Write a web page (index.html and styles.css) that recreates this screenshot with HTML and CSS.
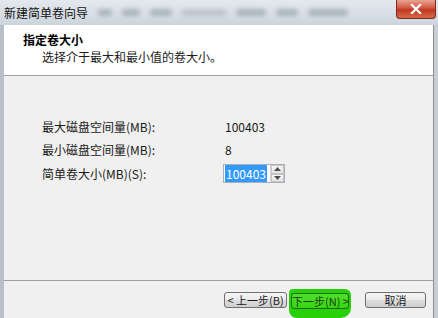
FILE: index.html
```html
<!DOCTYPE html>
<html lang="zh-CN">
<head>
  <meta charset="UTF-8">
  <title>新建简单卷向导</title>
  <link rel="stylesheet" href="styles.css">
</head>
<body>
  <div class="window">
    <div class="titlebar">
      <div class="title">新建简单卷向导</div>
      <div class="blur-strip">
        <span class="smudge w1"></span>
        <span class="smudge w2"></span>
        <span class="smudge w3"></span>
        <span class="smudge w4"></span>
        <span class="smudge w5"></span>
        <span class="smudge w6"></span>
        <span class="smudge w7"></span>
      </div>
      <div class="close-btn">
        <svg width="12" height="10" viewBox="0 0 12 10">
          <path d="M2 1 L10 9 M10 1 L2 9" stroke="#ffffff" stroke-width="2.4" stroke-linecap="square"></path>
        </svg>
      </div>
    </div>

    <div class="frame">
      <!-- Wizard header -->
      <div class="header">
        <div class="header-title">指定卷大小</div>
        <div class="header-sub">选择介于最大和最小值的卷大小。</div>
      </div>

      <!-- Wizard body -->
      <div class="body">
        <div class="field-grid">
          <div class="field-label">最大磁盘空间量(MB):</div>
          <div class="field-value">100403</div>

          <div class="field-label">最小磁盘空间量(MB):</div>
          <div class="field-value">8</div>

          <div class="field-label">简单卷大小(MB)(S):</div>
          <div class="spin">
            <div class="spin-input"><span class="selected">100403</span></div>
            <div class="spin-buttons">
              <div class="spin-btn">
                <svg width="7" height="4" viewBox="0 0 7 4"><path d="M0 4 L3.5 0 L7 4 Z" fill="#4d4d4d"></path></svg>
              </div>
              <div class="spin-btn">
                <svg width="7" height="4" viewBox="0 0 7 4"><path d="M0 0 L3.5 4 L7 0 Z" fill="#4d4d4d"></path></svg>
              </div>
            </div>
          </div>
        </div>
      </div>

      <!-- Buttons -->
      <div class="footer">
        <button class="btn btn-back">&lt; 上一步(B)</button>
        <div class="highlight">
          <button class="btn btn-next">下一步(N) &gt;</button>
        </div>
        <button class="btn btn-cancel">取消</button>
      </div>
    </div>
  </div>
</body>
</html>
```

FILE: styles.css
```css
* {
  margin: 0;
  padding: 0;
  box-sizing: border-box;
}

body {
  width: 438px;
  height: 318px;
  overflow: hidden;
  background: #dfe5ea;
  font-family: "Noto Sans CJK SC", "DejaVu Sans", sans-serif;
  font-size: 12px;
  color: #1a1a1a;
}

.window {
  display: flex;
  flex-direction: column;
  height: 318px;
}

.titlebar {
  height: 25px;
  display: flex;
  align-items: flex-start;
  background: linear-gradient(to bottom, #e4e9ee 0%, #d6dde4 60%, #ccd4dc 100%);
}

.title {
  padding: 4px 0 0 4px;
  font-size: 12px;
  line-height: 17px;
  color: #111111;
  white-space: nowrap;
}

.blur-strip {
  flex: 1;
  height: 25px;
  display: flex;
  align-items: center;
  gap: 10px;
  padding-left: 10px;
  filter: blur(2px);
  opacity: 0.4;
}

.smudge {
  height: 7px;
  background: #6c7682;
  border-radius: 3px;
}

.w1 { width: 14px; }
.w2 { width: 18px; }
.w3 { width: 22px; }
.w4 { width: 44px; opacity: 0.6; }
.w5 { width: 30px; }
.w6 { width: 22px; }
.w7 { width: 40px; }

.close-btn {
  width: 40px;
  height: 19px;
  margin-right: 2px;
  display: flex;
  align-items: center;
  justify-content: center;
  border: 1px solid #7a2a22;
  border-top: none;
  border-radius: 0 0 4px 4px;
  background: linear-gradient(to bottom, #e8a493 0%, #d2553f 45%, #c0381f 55%, #d66a4a 100%);
}

.frame {
  flex: 1;
  display: flex;
  flex-direction: column;
  border-left: 4px solid #b7c0c9;
  border-right: 4px solid #c6ced6;
}

.header {
  height: 51px;
  background: #ffffff;
  border-bottom: 1px solid #a0a0a0;
  border-right: 1px solid #8f8f8f;
  padding: 6px 0 0 19px;
}

.header-title {
  font-weight: 700;
  line-height: 17px;
  color: #000000;
}

.header-sub {
  padding-left: 19px;
  line-height: 17px;
  color: #1a1a1a;
}

.body {
  height: 205px;
  background: #f0f0f0;
  border-bottom: 1px solid #a0a0a0;
  border-right: 1px solid #8f8f8f;
  padding: 42px 0 0 38px;
}

.field-grid {
  display: grid;
  grid-template-columns: 182px auto;
  row-gap: 6px;
  align-items: center;
}

.field-label,
.field-value {
  line-height: 17px;
  color: #1a1a1a;
}

.field-value {
  padding-left: 1px;
}

.spin {
  display: flex;
  width: 62px;
  height: 19px;
  margin-left: -1px;
  border: 1px solid #a9afb8;
  background: #ffffff;
}

.spin-input {
  flex: 1;
  padding: 1px 0 0 1px;
  line-height: 15px;
}

.selected {
  background: #3399ff;
  color: #ffffff;
  padding: 0 1px;
}

.spin-buttons {
  width: 14px;
  display: flex;
  flex-direction: column;
  border-left: 1px solid #d6d6d6;
}

.spin-btn {
  flex: 1;
  display: flex;
  align-items: center;
  justify-content: center;
  background: linear-gradient(to bottom, #f6f6f6, #e4e4e4);
  border: 1px solid #c4c4c4;
}

.footer {
  flex: 1;
  background: #f0f0f0;
  border-right: 1px solid #8f8f8f;
  display: flex;
  align-items: flex-start;
  padding: 8px 0 0 220px;
}

.btn {
  height: 16px;
  padding: 0;
  white-space: nowrap;
  font-family: "Noto Sans CJK SC", "DejaVu Sans", sans-serif;
  font-size: 11px;
  line-height: 14px;
  color: #1a1a1a;
  border: 1px solid #707070;
  border-radius: 3px;
  background: linear-gradient(to bottom, #f4f4f4 0%, #ebebeb 48%, #dddddd 52%, #cfcfcf 100%);
}

.btn-back {
  width: 63px;
  margin-top: 3px;
}

.highlight {
  margin-left: 2px;
  padding: 3px 2px 9px 2px;
  background: #27d10a;
  border-radius: 4px 6px 10px 8px;
}

.btn-next {
  width: 58px;
  border-color: #1f6b12;
  background: linear-gradient(to bottom, #4ee02a 0%, #38d414 100%);
  color: #1d3d14;
}

.btn-cancel {
  width: 61px;
  margin-left: 14px;
  margin-top: 3px;
}
```
